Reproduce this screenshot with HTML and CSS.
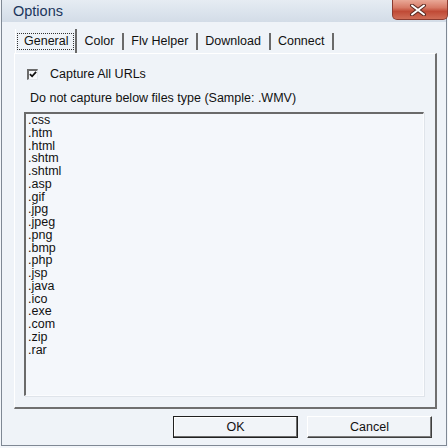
FILE: index.html
```html
<!DOCTYPE html>
<html lang="en">
<head>
    <meta charset="UTF-8">
    <title>Options</title>
    <link rel="stylesheet" href="styles.css">
</head>
<body>
    <div class="window">
        <div class="titlebar">
            <span class="title">Options</span>
            <button class="close-btn" aria-label="Close">
                <svg width="18" height="12" viewBox="0 0 18 12">
                    <path d="M3 1.5 L15 10.5 M15 1.5 L3 10.5" stroke="#5a2a22" stroke-width="4" stroke-linecap="round"/>
                    <path d="M3 1.5 L15 10.5 M15 1.5 L3 10.5" stroke="#ffffff" stroke-width="2" stroke-linecap="round"/>
                </svg>
            </button>
        </div>

        <div class="tabs">
            <span class="tab active"><span class="focus">General</span></span>
            <span class="tab">Color</span>
            <span class="tab">Flv Helper</span>
            <span class="tab">Download</span>
            <span class="tab">Connect</span>
        </div>

        <div class="panel">
            <label class="check-row">
                <span class="checkbox">
                    <svg width="9" height="9" viewBox="0 0 9 9">
                        <path d="M1 4 L3.5 6.5 L8 1.5" fill="none" stroke="#111" stroke-width="2"/>
                    </svg>
                </span>
                Capture All URLs
            </label>
            <p class="hint">Do not capture below files type (Sample: .WMV)</p>
            <div class="file-list">
                <div>.css</div>
                <div>.htm</div>
                <div>.html</div>
                <div>.shtm</div>
                <div>.shtml</div>
                <div>.asp</div>
                <div>.gif</div>
                <div>.jpg</div>
                <div>.jpeg</div>
                <div>.png</div>
                <div>.bmp</div>
                <div>.php</div>
                <div>.jsp</div>
                <div>.java</div>
                <div>.ico</div>
                <div>.exe</div>
                <div>.com</div>
                <div>.zip</div>
                <div>.rar</div>
            </div>
        </div>

        <div class="buttons">
            <button class="btn default">OK</button>
            <button class="btn">Cancel</button>
        </div>
    </div>
</body>
</html>
```

FILE: styles.css
```css
* {
    margin: 0;
    padding: 0;
    box-sizing: border-box;
}

body {
    width: 448px;
    height: 448px;
    background: #f3f6fa;
    font-family: "Liberation Sans", Arial, sans-serif;
    font-size: 12.5px;
    color: #111;
    overflow: hidden;
}

.window {
    width: 446px;
    height: 446px;
    margin: 0 1px 1px 1px;
    border: 1px solid #7f8894;
    border-top: none;
    background: #eff3f8;
    display: flex;
    flex-direction: column;
}

.titlebar {
    height: 22px;
    display: flex;
    justify-content: space-between;
    align-items: flex-start;
    background: linear-gradient(to bottom, #e6ecf3 0%, #dde5ee 45%, #d3dce7 100%);
}

.title {
    font-size: 14.5px;
    color: #1c355c;
    padding: 3px 0 0 11px;
    line-height: 17px;
}

.close-btn {
    width: 56px;
    height: 20px;
    margin-right: -2px;
    border: 1px solid #8b3b30;
    border-top: none;
    border-radius: 0 0 5px 5px;
    background: linear-gradient(to bottom, #e9a897 0%, #d77a66 40%, #c04a36 60%, #cf6d57 100%);
    display: flex;
    align-items: center;
    justify-content: center;
    padding-right: 5px;
}

.tabs {
    display: flex;
    align-items: center;
    height: 24px;
    margin: 7px 0 0 13px;
    line-height: 17px;
}

.tab {
    height: 17px;
    padding: 0 8px 0 7px;
    border-right: 2px solid #6a6a6a;
}

.tab.active {
    height: 24px;
    padding: 0 1px;
    border-left: 1px solid #ffffff;
    display: flex;
    align-items: center;
}

.focus {
    height: 17px;
    padding: 0 5px 0 6px;
    border: 1px dotted #333;
    line-height: 15px;
}

.panel {
    height: 356px;
    margin: 0 9px 0 12px;
    padding: 14px 11px 0 9px;
    border-top: 1px solid #ffffff;
    border-left: 1px solid #ffffff;
    border-right: 2px solid #6f6f6f;
    border-bottom: 2px solid #6f6f6f;
}

.check-row {
    display: flex;
    align-items: center;
    gap: 12px;
    height: 12px;
    margin-left: 3px;
    line-height: 14px;
}

.checkbox {
    width: 11px;
    height: 11px;
    background: #f7f9fc;
    border-top: 2px solid #6b6b6b;
    border-left: 2px solid #6b6b6b;
    border-right: 1px solid #e4e8ee;
    border-bottom: 1px solid #e4e8ee;
    display: flex;
    align-items: center;
    justify-content: center;
}

.hint {
    margin-top: 11px;
    padding-left: 6px;
    line-height: 14px;
}

.file-list {
    height: 284px;
    margin-top: 7px;
    padding-left: 2px;
    background: #f4f7fb;
    border-top: 2px solid #6a6a6a;
    border-left: 2px solid #6a6a6a;
    border-right: 1px solid #fbfcfe;
    border-bottom: 1px solid #fbfcfe;
    box-shadow: 1px 1px 0 #dfe4ea;
    line-height: 12.75px;
}

.buttons {
    display: flex;
    justify-content: flex-end;
    gap: 9px;
    margin: 7px 14px 0 0;
}

.btn {
    width: 125px;
    height: 22px;
    font-family: "Liberation Sans", Arial, sans-serif;
    font-size: 12.5px;
    color: #111;
    background: #f1f4f8;
    border: 1px solid;
    border-color: #ffffff #3e3e3e #3e3e3e #ffffff;
    box-shadow: inset -1px -1px 0 #7c7c7c;
}

.btn.default {
    border-color: #202020;
    box-shadow: inset -1px -1px 0 #6c6c6c, inset 1px 1px 0 #ffffff;
}
```
